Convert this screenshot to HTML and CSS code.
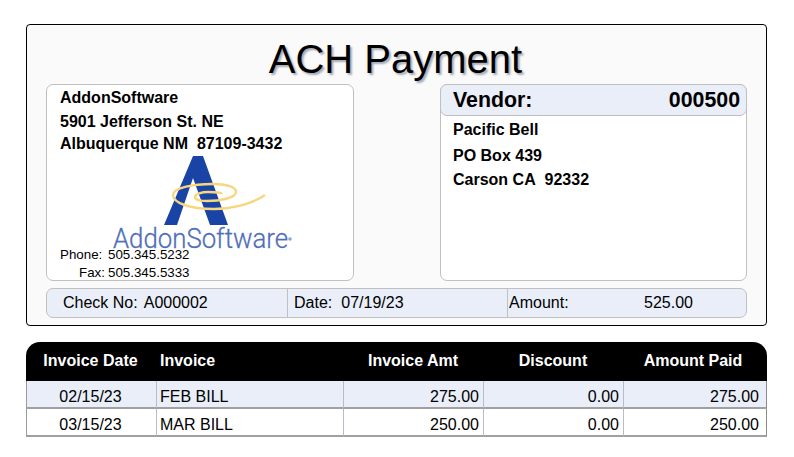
FILE: index.html
```html
<!DOCTYPE html>
<html lang="en">
<head>
<meta charset="utf-8">
<title>ACH Payment</title>
<link rel="stylesheet" href="styles.css">
</head>
<body>
<main class="page">
  <section class="card">
    <h1 class="title">ACH Payment</h1>
    <div class="boxes">
      <div class="box company">
        <svg class="logo" viewBox="0 0 200 100" width="200" height="100" aria-label="AddonSoftware logo">
          <path class="logo-a" d="M91 0H101L126 69H108L91 22L75 69H62Z"/>
          <path class="logo-swirl" d="M163 39C150 48 130 53 112 53C88 53 71 47 71 39C71 32 90 28 111 28C125 28 134 31 134 36C134 42 118 45 105 45C97 45 93 43 93 41C93 38 100 36 106 36C114 36 120 37 120 38"/>
          <text class="logo-text" x="11" y="92" textLength="175" lengthAdjust="spacingAndGlyphs">AddonSoftware</text>
          <circle class="logo-dot" cx="188" cy="83" r="1.8"/>
        </svg>
        <p class="addr first">AddonSoftware</p>
        <p class="addr second">5901 Jefferson St. NE</p>
        <p class="addr tight">Albuquerque NM&nbsp; 87109-3432</p>
        <div class="contact">
          <p class="contact-line"><span class="contact-label">Phone:</span><span>505.345.5232</span></p>
          <p class="contact-line"><span class="contact-label">Fax:</span><span>505.345.5333</span></p>
        </div>
      </div>
      <div class="box vendor">
        <div class="vendor-head"><span>Vendor:</span><span>000500</span></div>
        <p class="vaddr first">Pacific Bell</p>
        <p class="vaddr">PO Box 439</p>
        <p class="vaddr tight">Carson CA&nbsp; 92332</p>
      </div>
    </div>
    <div class="check">
      <div class="check-cell cell-no"><span class="check-label">Check No:</span><span>A000002</span></div>
      <div class="check-cell cell-date"><span class="date-label">Date:</span><span>07/19/23</span></div>
      <div class="check-cell cell-amt"><span class="amt-label">Amount:</span><span class="amt-value">525.00</span></div>
    </div>
  </section>
  <table class="invoices">
    <colgroup>
      <col class="c1"><col class="c2"><col class="c3"><col class="c4"><col class="c5">
    </colgroup>
    <thead>
      <tr><th class="date-head">Invoice Date</th><th class="left">Invoice</th><th>Invoice Amt</th><th>Discount</th><th class="paid-head">Amount Paid</th></tr>
    </thead>
    <tbody>
      <tr class="alt"><td class="center">02/15/23</td><td>FEB BILL</td><td class="num">275.00</td><td class="num">0.00</td><td class="num">275.00</td></tr>
      <tr><td class="center">03/15/23</td><td>MAR BILL</td><td class="num">250.00</td><td class="num">0.00</td><td class="num">250.00</td></tr>
    </tbody>
  </table>
</main>
</body>
</html>
```
FILE: styles.css
```css
* { box-sizing: border-box; }
html, body { margin: 0; padding: 0; background: #fff; }
body { font-family: "Liberation Sans", Arial, sans-serif; color: #000; overflow: hidden; }
p, h1 { margin: 0; }

.page { width: 794px; height: 457px; padding: 24px 27px 0 26px; }

.card {
  height: 302px;
  border: 1px solid #000;
  border-radius: 4px;
  background: #fafafa;
  padding: 0 19px;
}
.title {
  height: 59px;
  padding: 11px 2px 0 0;
  font-size: 40px;
  line-height: 46px;
  font-weight: 400;
  text-align: center;
  text-shadow: 2px 2px 2px #a3a9b4;
}
.boxes { display: flex; justify-content: space-between; height: 197px; }
.box {
  width: 308px;
  height: 197px;
  border: 1px solid #c0c0c0;
  border-radius: 7px;
  background: #fff;
  position: relative;
}
.vendor { width: 307px; }
.company { padding: 2px 0 0 13px; }
.logo { position: absolute; left: 55px; top: 71px; }
.logo-a { fill: #1a43a6; }
.logo-swirl { fill: none; stroke: #f6d77e; stroke-width: 2.4; }
.logo-text { font-family: "Roboto", "Liberation Sans", sans-serif; font-weight: 300; font-size: 28px; fill: #4f6eb8; stroke: #4f6eb8; stroke-width: 0.3; }
.logo-dot { fill: #8fa2d4; }

.addr { position: relative; font-size: 16px; font-weight: 700; line-height: 22px; }
.addr.first { margin-bottom: 1px; }
.addr.second { line-height: 23px; }
.contact { position: absolute; left: 13px; bottom: -2px; font-size: 13.33px; }
.contact-line { display: flex; height: 18px; line-height: 18px; }
.contact-label { width: 48px; padding-right: 6px; text-align: left; }
.contact-line + .contact-line .contact-label { padding-left: 19px; width: 48px; }

.vendor-head {
  display: flex;
  justify-content: space-between;
  height: 32px;
  margin: -1px -1px 0;
  padding: 0 6px 0 12px;
  border: 1px solid #c0c0c0;
  border-radius: 7px;
  background: #e9eef9;
  font-size: 21.33px;
  font-weight: 700;
  line-height: 30px;
}
.vaddr { padding-left: 12px; font-size: 16px; font-weight: 700; line-height: 25px; }
.vaddr.first { padding-top: 1px; margin-bottom: 1px; }
.vaddr.tight { line-height: 24px; }

.check {
  display: flex;
  height: 30px;
  margin-top: 7px;
  border: 1px solid #c0c0c0;
  border-radius: 7px;
  background: #e9eef9;
  font-size: 16px;
  line-height: 28px;
}
.check-cell { display: flex; border-left: 1px solid #c0c0c0; }
.cell-no { width: 240px; padding-left: 16px; border-left: 0; }
.cell-date { width: 220px; padding-left: 6px; }
.cell-amt { flex: 1; padding-left: 1px; }
.check-label { margin-right: 6px; }
.date-label { margin-right: 9px; }
.amt-label { width: 135px; }

.invoices {
  width: 741px;
  margin-top: 16px;
  border-collapse: separate;
  border-spacing: 0;
  table-layout: fixed;
  font-size: 16px;
  color: #000;
}
.c1 { width: 131px; } .c2 { width: 187px; } .c3 { width: 140px; } .c4 { width: 140px; } .c5 { width: 143px; }
.invoices th {
  height: 39px;
  background: #000;
  color: #fff;
  font-weight: 700;
  padding: 0 4px 1px 2px;
  text-align: center;
}
.invoices th.date-head { padding: 0 4px 1px 2px; }
.invoices th.paid-head { padding-right: 7px; }
.invoices th.left { text-align: left; padding-left: 3px; }
.invoices th:first-child { border-top-left-radius: 14px; }
.invoices th:last-child { border-top-right-radius: 14px; }
.invoices td {
  height: 28px;
  padding: 5px 3px 0;
  border-right: 1px solid #b6bdc9;
  border-bottom: 2px solid #a0a0a0;
  line-height: 21px;
}
.invoices td:first-child { border-left: 1px solid #9a9a9a; }
.invoices td:last-child { border-right: 1px solid #8c8c8c; padding-right: 7px; }
.invoices td.num { padding-right: 4px; }
.invoices td.num:last-child { padding-right: 7px; }
.invoices td.center { padding-right: 5px; }
.alt td { background: #e9eef9; }
.center { text-align: center; }
.num { text-align: right; }
```
